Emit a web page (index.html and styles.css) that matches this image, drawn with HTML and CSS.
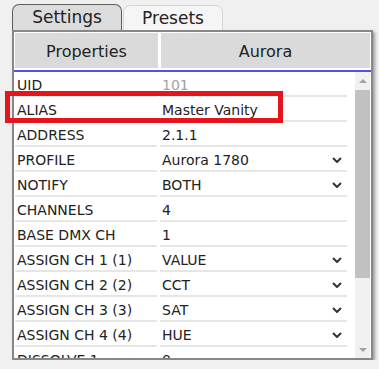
FILE: index.html
```html
<!DOCTYPE html>
<html lang="en">
<head>
    <meta charset="UTF-8">
    <meta name="viewport" content="width=device-width, initial-scale=1.0">
    <title>Fixture Settings</title>
    <link rel="stylesheet" href="styles.css">
</head>
<body>
    <div class="screen">
        <div class="tabs">
            <div class="tab active">Settings</div>
            <div class="tab">Presets</div>
        </div>
        <div class="panel">
            <div class="head">
                <div class="hcell">Properties</div>
                <div class="hcell">Aurora</div>
            </div>
            <div class="body">
                <div class="rows">
                    <div class="row"><div class="key">UID</div><div class="val muted">101</div></div>
                    <div class="row"><div class="key">ALIAS</div><div class="val">Master Vanity</div></div>
                    <div class="row"><div class="key">ADDRESS</div><div class="val">2.1.1</div></div>
                    <div class="row"><div class="key">PROFILE</div><div class="val">Aurora 1780<svg class="chev" width="10" height="6" viewBox="0 0 10 6"><path d="M1 1l4 4 4-4"/></svg></div></div>
                    <div class="row"><div class="key">NOTIFY</div><div class="val">BOTH<svg class="chev" width="10" height="6" viewBox="0 0 10 6"><path d="M1 1l4 4 4-4"/></svg></div></div>
                    <div class="row"><div class="key">CHANNELS</div><div class="val">4</div></div>
                    <div class="row"><div class="key">BASE DMX CH</div><div class="val">1</div></div>
                    <div class="row"><div class="key">ASSIGN CH 1 (1)</div><div class="val">VALUE<svg class="chev" width="10" height="6" viewBox="0 0 10 6"><path d="M1 1l4 4 4-4"/></svg></div></div>
                    <div class="row"><div class="key">ASSIGN CH 2 (2)</div><div class="val">CCT<svg class="chev" width="10" height="6" viewBox="0 0 10 6"><path d="M1 1l4 4 4-4"/></svg></div></div>
                    <div class="row"><div class="key">ASSIGN CH 3 (3)</div><div class="val">SAT<svg class="chev" width="10" height="6" viewBox="0 0 10 6"><path d="M1 1l4 4 4-4"/></svg></div></div>
                    <div class="row"><div class="key">ASSIGN CH 4 (4)</div><div class="val">HUE<svg class="chev" width="10" height="6" viewBox="0 0 10 6"><path d="M1 1l4 4 4-4"/></svg></div></div>
                    <div class="row"><div class="key">DISSOLVE 1</div><div class="val">0</div></div>
                </div>
                <div class="scrollbar">
                    <div class="sb-btn"><span class="tri up"></span></div>
                    <div class="thumb"></div>
                    <div class="sb-btn bottom"><span class="tri down"></span></div>
                </div>
            </div>
        </div>
        <div class="highlight"></div>
    </div>
</body>
</html>
```

FILE: styles.css
```css
body {
    margin: 0;
    background-color: #f0f0f0;
    font-family: "DejaVu Sans", Verdana, sans-serif;
    color: #222;
}
.screen {
    position: relative;
    padding: 4px 0 0 12px;
}
.tabs {
    display: flex;
    align-items: flex-end;
    height: 26px;
}
.tab {
    box-sizing: border-box;
    width: 100px;
    height: 25px;
    margin-left: 1px;
    border: 1px solid #d6d6d6;
    border-bottom: none;
    border-radius: 7px 7px 0 0;
    background-color: #f5f5f5;
    font-size: 17px;
    line-height: 24px;
    text-align: center;
}
.tab.active {
    width: 110px;
    height: 26px;
    margin-left: 0;
    border: 1.5px solid #5e5e5e;
    border-bottom: none;
    background-color: #dcdcdc;
}
.panel {
    box-sizing: border-box;
    display: flex;
    flex-direction: column;
    width: 361px;
    height: 330px;
    border: 2px solid #878787;
    background-color: #fff;
    box-shadow: 2px 2px 3px rgba(0, 0, 0, 0.35);
}
.head {
    display: grid;
    grid-template-columns: 143px 1fr;
    column-gap: 3px;
    padding: 1px 1px 2px 1px;
}
.hcell {
    box-sizing: border-box;
    height: 35px;
    padding-top: 2px;
    background-color: #dadada;
    font-size: 16px;
    display: flex;
    align-items: center;
    justify-content: center;
}
.body {
    flex: 1;
    min-height: 0;
    display: flex;
    border-top: 2px solid #5a4fe3;
}
.rows {
    flex: 1;
    padding-left: 1px;
    overflow: hidden;
}
.row {
    display: grid;
    grid-template-columns: 142px 1fr;
    column-gap: 3px;
    height: 25px;
    font-size: 14px;
}
.key, .val {
    box-sizing: border-box;
    height: 25px;
    border-bottom: 2px solid #e6e6e6;
    padding-top: 3px;
    padding-left: 2px;
    line-height: 20px;
    white-space: nowrap;
}
.val {
    display: flex;
    justify-content: space-between;
    align-items: center;
    padding-right: 5px;
}
.muted {
    color: #a2a2a2;
}
.chev path {
    fill: none;
    stroke: #333;
    stroke-width: 2;
}
.scrollbar {
    display: flex;
    flex-direction: column;
    width: 15px;
    margin: 0 1px 0 8px;
    background-color: #f1f1f1;
}
.sb-btn {
    height: 17px;
    display: flex;
    align-items: center;
    justify-content: center;
}
.sb-btn.bottom {
    margin-top: auto;
}
.thumb {
    height: 188px;
    margin-top: 1px;
    background-color: #c1c1c1;
}
.tri {
    width: 0;
    height: 0;
    border-left: 4px solid transparent;
    border-right: 4px solid transparent;
}
.tri.up {
    border-bottom: 4px solid #a3a3a3;
}
.tri.down {
    border-top: 4px solid #a3a3a3;
}
.highlight {
    position: absolute;
    left: 5px;
    top: 91px;
    width: 278px;
    height: 32px;
    box-sizing: border-box;
    border: 5px solid #e3161d;
}
```
